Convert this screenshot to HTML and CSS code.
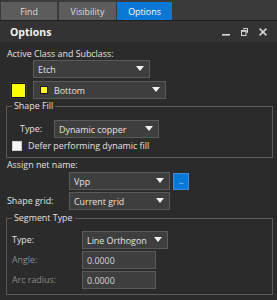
FILE: index.html
```html
<!DOCTYPE html>
<html>
<head>
<meta charset="utf-8">
<link rel="stylesheet" href="styles.css">
</head>
<body>
<div class="panel">
  <div class="tabs">
    <div class="tab tab-find">Find</div>
    <div class="tab tab-vis">Visibility</div>
    <div class="tab active">Options</div>
  </div>
  <div class="titlebar">
    <span class="title">Options</span>
    <div class="win-icons">
      <svg class="ic-min" width="8" height="8" viewBox="0 0 8 8"><rect x="0" y="6" width="8" height="1.6" fill="#d8d8d8"/></svg>
      <svg class="ic-restore" width="7" height="8" viewBox="0 0 7 8"><path d="M2.5 1.5 V0.5 H6.5 V4.5 H5.5" fill="none" stroke="#d8d8d8" stroke-width="1"/><rect x="0.5" y="2.5" width="4.5" height="5" fill="none" stroke="#d8d8d8" stroke-width="1"/><rect x="0" y="2" width="5.5" height="1.8" fill="#d8d8d8"/></svg>
      <svg class="ic-close" width="8" height="8" viewBox="0 0 8 8"><path d="M0.6 0.6 L7.4 7.4 M7.4 0.6 L0.6 7.4" stroke="#d8d8d8" stroke-width="1.5"/></svg>
    </div>
  </div>
  <div class="content">
    <div class="label">Active Class and Subclass:</div>
    <div class="row">
      <div class="select sel-etch"><span class="stext">Etch</span><span class="arrow"></span></div>
    </div>
    <div class="row row-sub">
      <span class="swatch"></span>
      <div class="select sel-bottom"><span class="mini"></span><span class="stext">Bottom</span><span class="arrow"></span></div>
    </div>

    <fieldset class="group group-fill">
      <legend>Shape Fill</legend>
      <div class="row fill-type">
        <span class="flabel w34">Type:</span>
        <div class="select sel-fill"><span class="stext">Dynamic copper</span><span class="arrow"></span></div>
      </div>
      <div class="row check-row">
        <span class="checkbox"></span>
        <span class="ctext">Defer performing dynamic fill</span>
      </div>
    </fieldset>

    <div class="label label-net">Assign net name:</div>
    <div class="row row-net">
      <div class="select sel-net"><span class="stext">Vpp</span><span class="arrow"></span></div>
      <div class="btn-dots">...</div>
    </div>
    <div class="row row-grid">
      <span class="flabel w63">Shape grid:</span>
      <div class="select sel-grid"><span class="stext">Current grid</span><span class="arrow"></span></div>
    </div>

    <fieldset class="group group-seg">
      <legend>Segment Type</legend>
      <div class="row seg-type">
        <span class="flabel w70">Type:</span>
        <div class="select sel-seg"><span class="stext">Line Orthogon</span><span class="arrow"></span></div>
      </div>
      <div class="row seg-row">
        <span class="flabel w70 dim">Angle:</span>
        <div class="input">0.0000</div>
      </div>
      <div class="row seg-row">
        <span class="flabel w70 dim">Arc radius:</span>
        <div class="input">0.0000</div>
      </div>
    </fieldset>
  </div>
</div>
</body>
</html>
```
FILE: styles.css
```css
* { box-sizing: border-box; }
html, body { margin: 0; padding: 0; }
body {
  background: #2b2b2b;
  font-family: "Open Sans", "Noto Sans", sans-serif;
  font-size: 8.9px;
  color: #e2e2e2;
}
.panel {
  width: 277px;
  height: 300px;
  overflow: hidden;
  background: #2b2b2b;
}
.tabs {
  height: 20px;
  background: #3a3a3a;
  display: flex;
  align-items: flex-end;
  padding-left: 1px;
}
.tab {
  height: 18px;
  background: #5c5c5c;
  color: #dcdcdc;
  display: flex;
  align-items: center;
  justify-content: center;
}
.tab-find { width: 56px; }
.tab-vis { width: 57px; margin-left: 2px; }
.tab.active {
  width: 55px;
  margin-left: 1px;
  background: #0a78d7;
  color: #ffffff;
}
.titlebar {
  height: 22px;
  border-top: 1px solid #1f1f1f;
  background: #333333;
  display: flex;
  align-items: center;
  justify-content: space-between;
  padding: 0 10px 0 10px;
}
.title {
  font-weight: bold;
  font-size: 10.5px;
  color: #f2f2f2;
}
.win-icons {
  display: flex;
  align-items: center;
  gap: 11px;
}
.win-icons svg { display: block; }
.content {
  padding: 6px 4px 0 6px;
}
.label {
  line-height: 12px;
  height: 12px;
  padding-left: 1px;
}
.row {
  display: flex;
  align-items: center;
}
.select {
  height: 18px;
  background: #3e3e3e;
  border: 1px solid #5a5a5a;
  display: flex;
  align-items: center;
  padding-left: 4px;
  padding-right: 5px;
  color: #e4e4e4;
}
.stext {
  flex: 1;
  white-space: nowrap;
}
.arrow {
  flex: none;
  width: 0;
  height: 0;
  border-left: 4px solid transparent;
  border-right: 4px solid transparent;
  border-top: 5px solid #f2f2f2;
  margin-top: -2px;
}
.sel-etch { margin-left: 27px; width: 117px; }
.row-sub { margin-top: 3px; }
.swatch {
  width: 15px;
  height: 15px;
  margin-left: 5px;
  background: #ffff00;
  border: 1px solid #111111;
  box-shadow: 0 0 0 1px #3a3a3a;
}
.sel-bottom { margin-left: 7px; width: 133px; padding-left: 6px; }
.mini {
  width: 8px;
  height: 8px;
  background: #ffff00;
  border: 1px solid #1a1a1a;
  margin-right: 6px;
}
.group {
  margin: 1px 0 0 0;
  border: 1px solid #5a5a5a;
  padding: 0 6px 5px 5px;
  min-width: 0;
}
.group legend {
  padding: 0 2px;
  margin: 0;
  line-height: 12px;
  height: 12px;
  color: #e2e2e2;
}
.flabel { flex: none; line-height: 12px; }
.w34 { width: 34px; }
.w63 { width: 63px; padding-left: 1px; }
.w70 { width: 70px; }
.dim { color: #8a8a8a; }
.fill-type { margin-top: 8px; padding-left: 8px; }
.sel-fill { width: 105px; }
.check-row { margin-top: 2px; height: 12px; }
.checkbox {
  width: 10px;
  height: 10px;
  background: #f5f5f5;
  border: 1px solid #cfcfcf;
}
.ctext { margin-left: 6px; line-height: 12px; }
.label-net { margin-top: 1px; }
.row-net { margin-top: 1px; }
.sel-net { margin-left: 63px; width: 101px; }
.btn-dots {
  width: 16px;
  height: 17px;
  margin-left: 3px;
  background: #0a78d7;
  border: 1px solid #3a8ee0;
  color: #cfe3f8;
  font-size: 7px;
  line-height: 7px;
  display: flex;
  align-items: flex-end;
  justify-content: center;
  padding-bottom: 4px;
  letter-spacing: -0.5px;
}
.row-grid { margin-top: 2px; }
.sel-grid { width: 101px; }
.group-seg { margin-top: 2px; }
.seg-type { margin-top: 7px; }
.sel-seg { width: 86px; }
.seg-row { margin-top: 2px; }
.input {
  width: 74px;
  height: 18px;
  background: #3e3e3e;
  border: 1px solid #5a5a5a;
  padding-left: 4px;
  display: flex;
  align-items: center;
  color: #d6d6d6;
}
```
